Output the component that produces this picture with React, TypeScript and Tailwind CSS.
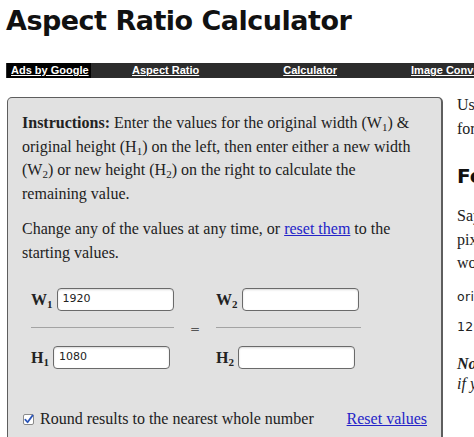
import React from "react";

const serif = "font-['Liberation_Serif',Georgia,serif]";
const sans = "font-['DejaVu_Sans',sans-serif]";

function Sub({ n }: { n: string }) {
  return <sub className="text-[11px] leading-none relative top-[3px]">{n}</sub>;
}

function Label({ l, n }: { l: string; n: string }) {
  return (
    <span className={`${serif} font-bold text-[16px] text-[#222] leading-none`}>
      {l}
      <Sub n={n} />
    </span>
  );
}

function Field({ l, n, value }: { l: string; n: string; value: string }) {
  return (
    <div className="flex items-center gap-[4px] h-[23px]">
      <Label l={l} n={n} />
      <div
        className={`w-[117px] h-[23px] bg-white border border-[#6a6a6a] rounded-[4px] shadow-[inset_0_1px_2px_rgba(0,0,0,0.15)] flex items-center px-[5px] ${sans} text-[11px] text-[#222]`}
      >
        {value}
      </div>
    </div>
  );
}

export default function App() {
  return (
    <div className="w-[474px] h-[437px] overflow-hidden bg-white text-[#222]">
      <h1
        className={`${sans} font-bold text-[27px] leading-[27px] tracking-[-0.5px] pl-[6px] pt-[7px] text-[#111] whitespace-nowrap`}
      >
        Aspect Ratio Calculator
      </h1>

      <div className="ml-[6px] mt-[29px] h-[15px] w-[600px] bg-[#2c2c2c] flex items-center font-['Liberation_Sans',Arial,sans-serif] font-bold text-[11px] text-white whitespace-nowrap">
        <div className="h-[15px] w-[84px] ml-[1px] bg-black flex items-center pl-[4px]">
          <span className="underline">Ads by Google</span>
        </div>
        <span className="underline ml-[41px]">Aspect Ratio</span>
        <span className="underline ml-[84px]">Calculator</span>
        <span className="underline ml-[74px]">Image Converter</span>
      </div>

      <div className="flex items-start gap-[14px] ml-[7px] mt-[12px] w-[800px]">
        <div className="shrink-0 w-[436px] h-[400px] mt-[7px] bg-[#e1e1e1] border border-[#5e5e5e] border-r-2 rounded-[5px] pl-[14px] pr-[14px] pt-[13px]">
          <div className={`${serif} text-[16px] leading-[23.5px] text-[#222] pr-[14px]`}>
            <p>
              <b>Instructions:</b> Enter the values for the original width (W<Sub n="1" />) &amp; original
              height (H<Sub n="1" />) on the left, then enter either a new width (W<Sub n="2" />) or new
              height (H<Sub n="2" />) on the right to calculate the remaining value.
            </p>
            <p className="mt-[12px]">
              Change any of the values at any time, or{" "}
              <a className="text-[#2424c8] underline">reset them</a> to the starting values.
            </p>
          </div>

          <div className="mt-[24px] pl-[9px] grid grid-cols-[143px_42px_145px]">
            <Field l="W" n="1" value="1920" />
            <div />
            <Field l="W" n="2" value="" />

            <div className="mt-[16px] mb-[18px] h-px bg-[#a3a3a3]" />
            <div className={`flex items-center justify-center ${sans} text-[12px] text-[#555] leading-none`}>=</div>
            <div className="mt-[16px] mb-[18px] h-px bg-[#a3a3a3]" />

            <Field l="H" n="1" value="1080" />
            <div />
            <Field l="H" n="2" value="" />
          </div>

          <div className={`mt-[38px] flex items-center ${serif} text-[16px] text-[#222] whitespace-nowrap`}>
            <span className="ml-[1px] w-[11px] h-[11px] bg-white border border-[#8a8a8a] rounded-[2px] flex items-center justify-center">
              <svg viewBox="0 0 12 12" className="w-[11px] h-[11px] overflow-visible">
                <path d="M2.5 6.2 L5 9 L10.5 1.5" fill="none" stroke="#2b55b8" strokeWidth="1.9" strokeLinecap="round" strokeLinejoin="round" />
              </svg>
            </span>
            <span className="ml-[6px]">Round results to the nearest whole number</span>
            <a className="ml-auto text-[#2424c8] underline">Reset values</a>
          </div>
        </div>

        <div className={`shrink-0 w-[360px] pt-[3px] ${serif} text-[16px] leading-[24px] text-[#222] whitespace-nowrap`}>
          <p>
            Use this calculator to work out dimensions
            <br />
            for a resized image or video.
          </p>
          <h2 className={`${sans} font-bold text-[20px] leading-[24px] mt-[23px] text-[#111]`}>Formula</h2>
          <p className="mt-[16px] leading-[23.5px]">
            Say you have an image that is 1600 x 1200
            <br />
            pixels, and you want to know how tall it
            <br />
            would be at 400 pixels wide. The formula is:
          </p>
          <p className={`${sans} text-[12.5px] tracking-[0.3px] leading-[14px] mt-[15px]`}>
            original height / original width x new width = new height
          </p>
          <p className={`${sans} text-[12.5px] tracking-[0.3px] leading-[14px] mt-[16px]`}>1200 / 1600 x 400 = 300</p>
          <p className="mt-[20px] italic leading-[20px]">
            <b>Note:</b> the result will be rounded
            <br />
            if <a className="underline">you</a> check the box.
          </p>
        </div>
      </div>
    </div>
  );
}
